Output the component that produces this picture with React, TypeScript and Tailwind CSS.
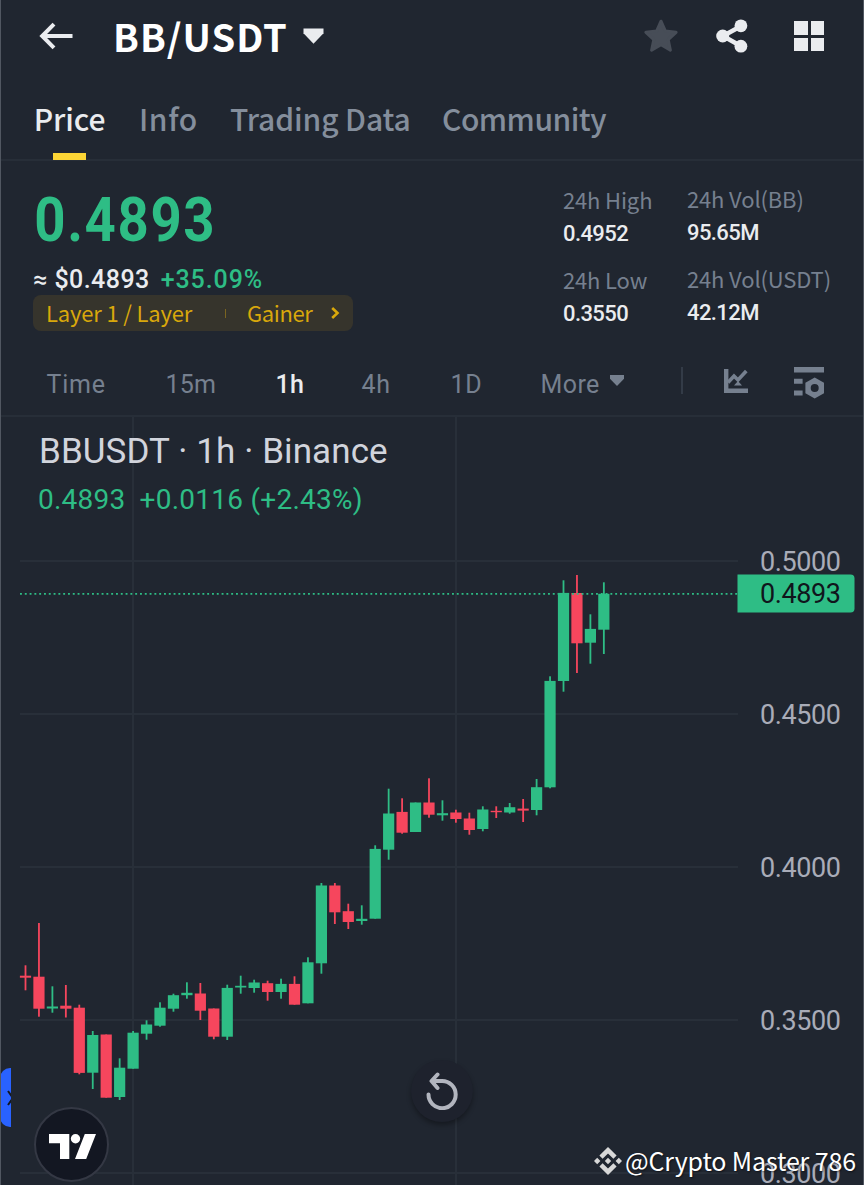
import clsx from 'clsx'

type Candle = [top: number, bottom: number, high: number, low: number, up: 0 | 1]

// body top, body bottom, high, low in chart pixels, and whether the candle closed up
const candles: Candle[] = [
  [975.7, 977.7, 965.3, 990.3, 0],
  [976.7, 1008.7, 923, 1016.7, 0],
  [1006.5, 1008.5, 986.3, 1012.7, 1],
  [1005.7, 1008.7, 985, 1017.5, 0],
  [1007.7, 1072.9, 1004.7, 1074.3, 0],
  [1035, 1072.7, 1031, 1089, 1],
  [1034.5, 1097.7, 1034.5, 1097.7, 0],
  [1067.7, 1097, 1058.3, 1100, 1],
  [1032.7, 1068.7, 1031, 1068.7, 1],
  [1024.5, 1033.7, 1020.3, 1039.7, 1],
  [1007.7, 1025.7, 1002.3, 1026.7, 1],
  [995.2, 1008.7, 993.7, 1011.7, 1],
  [992.8, 995.2, 982.3, 998.7, 1],
  [993.5, 1010.7, 983, 1020, 0],
  [1008.5, 1036.7, 1008.5, 1039.3, 0],
  [987.9, 1036.7, 984.7, 1040, 1],
  [985.8, 987.5, 975.7, 993.7, 1],
  [982.5, 988, 979.7, 992.7, 1],
  [983.2, 992, 980.7, 1000.7, 0],
  [983.9, 992, 978.7, 998.7, 1],
  [983.9, 1004.7, 976.3, 1004.7, 0],
  [962.3, 1003.3, 957.3, 1003.3, 1],
  [885.5, 963.3, 883, 973.7, 1],
  [885.5, 912.3, 883, 924, 0],
  [911.2, 922, 903.7, 929, 0],
  [918.8, 921, 905.3, 924.7, 1],
  [848.9, 918.7, 845.3, 918.7, 1],
  [813.5, 849.7, 788.7, 859.7, 1],
  [811.9, 832.7, 798.3, 833.7, 0],
  [802.5, 832, 802.5, 832, 1],
  [802.5, 814.7, 778.3, 817.7, 0],
  [813.2, 815.3, 800.3, 820.7, 1],
  [812.5, 819, 809.7, 822.7, 0],
  [818.5, 830, 812.7, 834.7, 0],
  [809.5, 829, 806.3, 831.3, 1],
  [810.8, 812.2, 806.3, 818, 0],
  [807.2, 812.5, 803, 813.7, 1],
  [808.6, 810.6, 799, 822, 0],
  [787.2, 810, 779, 815.3, 1],
  [680.9, 787.3, 676.3, 788.3, 1],
  [592.9, 681, 580.3, 691.7, 1],
  [593, 643.3, 575, 673, 0],
  [628.9, 642.7, 614.3, 663.7, 1],
  [593.8, 629.7, 582.3, 654, 1],
]

const priceLines = [
  { y: 561, label: '0.5000' },
  { y: 714, label: '0.4500' },
  { y: 867, label: '0.4000' },
  { y: 1020, label: '0.3500' },
  { y: 1173, label: '0.3000' },
]

const stats = [
  { label: '24h High', value: '0.4952', className: 'pt-px' },
  { label: '24h Vol(BB)', value: '95.65M', className: '' },
  { label: '24h Low', value: '0.3550', className: 'pt-px' },
  { label: '24h Vol(USDT)', value: '42.12M', className: '' },
]

function Header() {
  return (
    <header className="mb-1 flex h-[72px] items-center pl-[39px] pr-[40px]">
      <svg className="h-[28px] w-[34px]" viewBox="0 0 34 28" fill="none" stroke="#eaecef" strokeWidth="4">
        <path d="M15 2.2 3.2 14 15 25.8M3 14h30.5" />
      </svg>
      <h1 className="ml-[40px] w-[175px] whitespace-nowrap font-['Noto_Sans_CJK_SC'] text-[38px] font-bold leading-[72px] tracking-[1px] text-white">
        BB/USDT
      </h1>
      <svg className="ml-[15px] h-4 w-[21px]" viewBox="0 0 21 16">
        <path d="M.5.5h20v4.7L10.5 15.8.5 5.2z" fill="#eaecef" />
      </svg>
      <div className="ml-auto flex items-center">
        <svg className="h-[34px] w-[34px]" viewBox="0 0 34 34">
          <path
            d="M17 2.2l4.4 9.9 10.7 1.2-7.9 7.3 2.2 10.6L17 25.8l-9.4 5.4 2.2-10.6-7.9-7.3 10.7-1.2z"
            fill="#474d57"
            stroke="#474d57"
            strokeWidth="3"
            strokeLinejoin="round"
          />
        </svg>
        <svg className="ml-[38px] h-[34px] w-8" viewBox="0 0 32 34" fill="#eaecef">
          <path d="M7 17 25.2 7M7 17l18.2 10.2" stroke="#eaecef" strokeWidth="4.5" />
          <circle cx="6.7" cy="17" r="6.5" />
          <circle cx="24.9" cy="6.8" r="6.4" />
          <circle cx="24.9" cy="27.2" r="6.4" />
        </svg>
        <div className="ml-[46px] grid grid-cols-2 gap-[3px]">
          <i className="size-[13.5px] bg-[#eaecef]" />
          <i className="size-[13.5px] bg-[#eaecef]" />
          <i className="size-[13.5px] bg-[#eaecef]" />
          <i className="size-[13.5px] bg-[#eaecef]" />
        </div>
      </div>
    </header>
  )
}

function Tabs() {
  return (
    <nav className="flex h-[85px] items-start border-b-2 border-[#272e38] pl-[34px] font-['Noto_Sans_CJK_SC'] text-[30px] font-medium leading-[85px] text-[#848e9c]">
      <div className="flex w-[71px] flex-col items-center">
        <span className="h-[77px] tracking-[-0.1px] text-[#eaecef]">Price</span>
        <i className="h-[7px] w-[33px] bg-[#fcd535]" />
      </div>
      <span className="ml-[34px] w-[58px] tracking-[0.6px]">Info</span>
      <span className="ml-[33px] w-[180px] whitespace-nowrap tracking-[-0.1px]">Trading Data</span>
      <span className="ml-[32px] tracking-[-0.5px]">Community</span>
    </nav>
  )
}

function Summary() {
  return (
    <section className="flex h-[189px] pl-[33px]">
      <div className="w-[530px] pt-[26px]">
        <div className="h-[77px] origin-left scale-x-[0.88] pl-[1.5px] font-['Roboto'] text-[62px] font-bold leading-[66px] tracking-[1.8px] text-[#2ebd85]">
          0.4893
        </div>
        <div className="flex h-[31px] items-center whitespace-nowrap font-['Roboto'] text-[25px] font-medium leading-[31px]">
          <span className="tracking-[0.45px] text-[#eaecef]">≈ $0.4893</span>
          <span className="ml-[11px] tracking-[0.9px] text-[#2ebd85]">+35.09%</span>
        </div>
        <div className="flex h-9 w-80 items-center rounded-lg bg-[#36342c] pl-[13px] font-['Noto_Sans_CJK_SC'] text-[22px] leading-[34px] text-[#d9a80b]">
          <span className="-mt-[3px] w-[179px] tracking-[-0.15px]">Layer 1 / Layer</span>
          <i className="h-[9px] w-px bg-[#7a6420]" />
          <span className="-mt-[3px] ml-[21px] w-[67px] tracking-[-0.4px]">Gainer</span>
          <svg className="ml-[17px] h-3 w-[9px]" viewBox="0 0 9 12" fill="none" stroke="#d9a80b" strokeWidth="2.6">
            <path d="M1.2 1 6.5 6l-5.3 5" />
          </svg>
        </div>
      </div>
      <div className="grid h-[160px] grid-cols-[124px_auto] grid-rows-[80px_80px] content-start pt-6">
        {stats.map((s) => (
          <div key={s.label} className={s.className}>
            <div className="h-8 whitespace-nowrap font-['Noto_Sans_CJK_SC'] text-[22px] leading-[27px] tracking-[-0.15px] text-[#76808f]">
              {s.label}
            </div>
            <div className="h-8 font-['Roboto'] text-[22px] font-medium leading-[31px] tracking-[-0.6px] text-[#eaecef]">
              {s.value}
            </div>
          </div>
        ))}
      </div>
    </section>
  )
}

function Intervals() {
  const items = [
    { label: 'Time', className: 'w-[119px] tracking-[0.8px]' },
    { label: '15m', className: 'w-[110px] tracking-[0.2px]' },
    { label: '1h', className: 'w-[86px] font-medium tracking-[0.4px] text-[#eaecef]' },
    { label: '4h', className: 'w-[89px] tracking-[0.8px]' },
    { label: '1D', className: 'w-[90px] tracking-[0.6px]' },
    { label: 'More', className: 'w-[60px] tracking-[0.4px]' },
  ]
  return (
    <div className="flex h-[67px] items-center border-b-2 border-[#272e38] pl-[46.5px] text-[#76808f]">
      {items.map((item) => (
        <span key={item.label} className={clsx("mt-1 shrink-0 font-['Roboto'] text-[25px] leading-[60px]", item.className)}>
          {item.label}
        </span>
      ))}
      <svg className="-mt-1 ml-[9.5px] h-[11px] w-[14px]" viewBox="0 0 14 11">
        <path d="M0 0h14v3.8L7 11 0 3.8z" fill="#76808f" />
      </svg>
      <i className="-mt-1 ml-[57px] h-[27px] w-[2px] bg-[#333b47]" />
      <svg className="-mt-1 ml-[41px] h-6 w-6" viewBox="0 0 24 24" fill="none" stroke="#76808f">
        <path d="M2.2 0v22M0 21.8h24" strokeWidth="4.4" />
        <path d="m4 13.5 6-6.5 4 4L22.3 2" strokeWidth="3.6" />
        <path d="m14 12 4 4.5h-8z" fill="#76808f" stroke="none" />
      </svg>
      <svg className="ml-[46px] h-8 w-[30px]" viewBox="0 0 30 32" fill="#76808f">
        <path d="M0 0h30v5.4H0zM0 11.7h8.6v5H0zM0 23.4h8.6v5H0z" />
        <path
          fillRule="evenodd"
          d="M20.7 10.4 30 15.7v10.6l-9.3 5.3-9.3-5.3V15.7zM20.7 17a4 4 0 1 0 0 8 4 4 0 0 0 0-8z"
        />
      </svg>
    </div>
  )
}

function Chart() {
  return (
    <svg className="block h-[768px] w-[864px] font-['Roboto']" viewBox="0 417 864 768">
      <g fill="#282f39">
        <rect x="132" y="417" width="2" height="768" />
        <rect x="455" y="417" width="2" height="768" />
        {priceLines.map((l) => (
          <rect key={l.label} x="20" y={l.y - 1} width="718" height="2" />
        ))}
      </g>
      <g fontSize="27" fill="#a9acb8">
        {priceLines.map((l) => (
          <text key={l.label} x="760" y={l.y + 9.5} textLength="81">
            {l.label}
          </text>
        ))}
      </g>
      {candles.map(([top, bottom, high, low, up], i) => {
        const x = 25.5 + i * 13.45
        return (
          <g key={i} fill={up ? '#2ebd85' : '#f6465d'}>
            <rect x={x - 0.9} y={high} width="1.8" height={low - high} />
            <rect x={x - 5.6} y={top} width="11.2" height={bottom - top} />
          </g>
        )
      })}
      <path d="M20 593.8h718" stroke="#2ebd85" strokeWidth="1.8" strokeDasharray="1.9 2.9" />
      <path d="M737.5 574.5h113q4 0 4 4v30q0 4-4 4h-113z" fill="#2ebd85" />
      <text x="760" y="603.3" fontSize="27" fill="#10151c" textLength="81">
        0.4893
      </text>
    </svg>
  )
}

function ChartLegend() {
  return (
    <div className="absolute left-[38px] top-[14px] whitespace-nowrap font-['Roboto']">
      <div className="h-[42px] pl-px text-[35px] leading-[42px] tracking-[0.1px] text-[#d1d4dc]">
        BBUSDT · 1h · Binance
      </div>
      <div className="flex h-[54px] gap-[14px] text-[28px] leading-[54px] tracking-[0.25px] text-[#2ebd85]">
        <span>0.4893</span>
        <span>+0.0116 (+2.43%)</span>
      </div>
    </div>
  )
}

function TradingViewBadge() {
  return (
    <div className="absolute left-[34px] top-[690px] flex size-[75px] items-center justify-center rounded-full border-2 border-[#343844] bg-[#131722]">
      <svg className="ml-px mt-1 h-[25px] w-[47px]" viewBox="0 0 47 25" fill="#fff">
        <path d="M0 0h20.3v25H11V9.2H0zM35.8 0H47l-9.8 25H26z" />
        <circle cx="26.5" cy="4.8" r="4.7" />
      </svg>
    </div>
  )
}

function Watermark() {
  return (
    <div className="absolute left-[594px] top-[723px] flex h-[42px] items-center whitespace-nowrap">
      <svg className="h-7 w-7" viewBox="0 0 28 28" fill="#d8d8d8">
        <path d="M14 0l8.6 8.6-3.2 3.2L14 6.4l-5.4 5.4-3.2-3.2zM14 28l8.6-8.6-3.2-3.2-5.4 5.4-5.4-5.4-3.2 3.2zM3.2 10.8 6.4 14l-3.2 3.2L0 14zM24.8 10.8 28 14l-3.2 3.2-3.2-3.2zM14 10.8l3.2 3.2-3.2 3.2-3.2-3.2z" />
      </svg>
      <span className="-mt-[3px] ml-[3px] font-['Noto_Sans_CJK_SC'] text-[25px] leading-[42px] tracking-[-0.13px] text-white [text-shadow:1px_1px_2px_#0008]">
        @Crypto Master 786
      </span>
    </div>
  )
}

export default function App() {
  return (
    <main className="relative h-[1185px] w-[864px] overflow-hidden bg-[#202630]">
      <Header />
      <Tabs />
      <Summary />
      <Intervals />
      <div className="relative">
        <Chart />
        <ChartLegend />
        <div className="absolute left-0 top-[651px] flex h-[59px] w-[11px] items-center overflow-hidden rounded-l-[10px] bg-[#2962ff]">
          <svg className="ml-[7px] h-4 w-[8px] shrink-0" viewBox="0 0 8 16" fill="none" stroke="#131722" strokeWidth="2">
            <path d="m1 1 5 7-5 7" />
          </svg>
        </div>
        <TradingViewBadge />
        <div className="absolute left-[411px] top-[643px] flex size-[62px] items-center justify-center rounded-full bg-[#1e222d] shadow-[0_3px_5px_#0005]">
          <svg className="h-[38px] w-[32px]" viewBox="0 0 32 38" fill="none" stroke="#b2b5be" strokeWidth="4" strokeLinecap="round" strokeLinejoin="round">
            <path d="M2.5 22.5A13.6 13.6 0 1 0 16 9H6M11.5 2.5 5.5 9l6 7" />
          </svg>
        </div>
        <Watermark />
      </div>
      <i className="absolute left-0 top-0 h-full w-px bg-[#515761]" />
      <i className="absolute right-0 top-0 h-full w-px bg-[#515761]" />
    </main>
  )
}
